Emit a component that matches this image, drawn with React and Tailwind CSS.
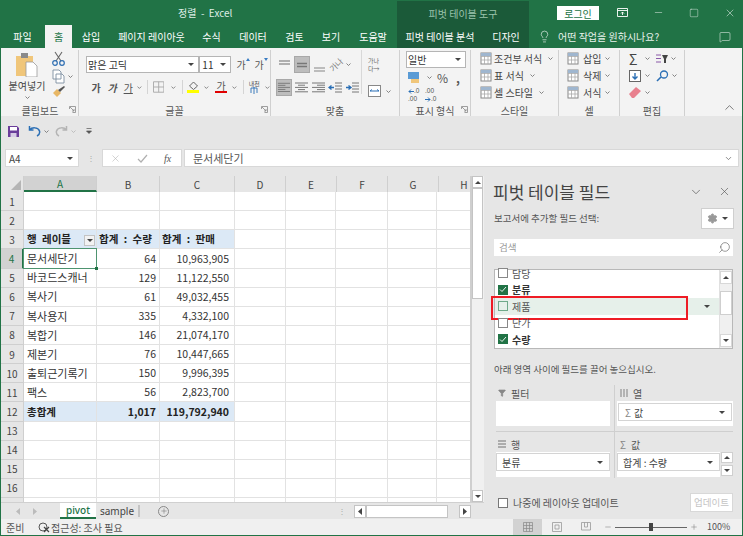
import React from 'react';
import { ChevronDown, ChevronUp, X, Search, Lightbulb, MessageSquare, Minus, Square, Settings, Filter, Plus } from 'lucide-react';

const tabs = [
  ['파일', 'w-[45px]'],
  ['홈', 'w-[27px] bg-[#f3f3f3] text-[#217346]'],
  ['삽입', 'w-[38px]'],
  ['페이지 레이아웃', 'w-[83px]'],
  ['수식', 'w-[37px]'],
  ['데이터', 'w-[46px]'],
  ['검토', 'w-[37px]'],
  ['보기', 'w-[36px]'],
  ['도움말', 'w-[48px]'],
  ['피벗 테이블 분석', 'w-[86px] bg-[#1b5a39]'],
  ['디자인', 'w-[46px] bg-[#1b5a39]'],
];

const columns = [
  ['A', 'w-[73px] bg-[#d2d2d2] text-[#217346] border-b-2 border-b-[#217346]'],
  ['B', 'w-[63px]'],
  ['C', 'w-[75px]'],
  ['D', 'w-[51px]'],
  ['E', 'w-[51px]'],
  ['F', 'w-[51px]'],
  ['G', 'w-[51px]'],
  ['H', 'w-[51px]'],
];

const rows = [
  ['문서세단기', '64', '10,963,905'],
  ['바코드스캐너', '129', '11,122,550'],
  ['복사기', '61', '49,032,455'],
  ['복사용지', '335', '4,332,100'],
  ['복합기', '146', '21,074,170'],
  ['제본기', '76', '10,447,665'],
  ['출퇴근기록기', '150', '9,996,395'],
  ['팩스', '56', '2,823,700'],
];

const Caret = ({ className = '' }) => (
  <svg width="5" height="3" viewBox="0 0 5 3" className={className}>
    <path d="M0.5 0.5 L2.5 2.5 L4.5 0.5" fill="none" stroke="#777" strokeWidth="0.9" />
  </svg>
);

const Solid = ({ className = '' }) => (
  <svg width="6" height="3" viewBox="0 0 6 3" className={className}>
    <path d="M0 0 H6 L3 3 Z" fill="#444" />
  </svg>
);

const SolidUp = () => (
  <svg width="6" height="3" viewBox="0 0 6 3">
    <path d="M0 3 H6 L3 0 Z" fill="#444" />
  </svg>
);

const SolidSide = ({ flip, color = '#444' }) => (
  <svg width="4" height="7" viewBox="0 0 4 7">
    <path d={flip ? 'M4 0 V7 L0 3.5 Z' : 'M0 0 V7 L4 3.5 Z'} fill={color} />
  </svg>
);

const Lines = ({ kind = 'left', active }) => {
  const sets = {
    left: [[1, 14], [1, 9], [1, 14], [1, 9], [1, 14]],
    center: [[1, 14], [4, 11], [1, 14], [4, 11], [1, 14]],
    right: [[1, 14], [6, 14], [1, 14], [6, 14], [1, 14]],
  };
  return (
    <span className={`w-[16px] h-[17px] flex items-center justify-center ${active ? 'bg-[#bdbdbd] border border-[#a8a8a8]' : ''}`}>
      <svg width="15" height="13" viewBox="0 0 15 13">
        {sets[kind].map(([a, b], i) => (
          <line key={i} x1={a} x2={b} y1={2 + i * 2.2} y2={2 + i * 2.2} stroke="#777" strokeWidth="1" />
        ))}
      </svg>
    </span>
  );
};

const Indent = ({ flip }) => (
  <svg width="15" height="13" viewBox="0 0 15 13">
    {[2, 5, 8, 11].map((y) => (
      <line key={y} x1="7" x2="14" y1={y} y2={y} stroke="#777" strokeWidth="1" />
    ))}
    <path d={flip ? 'M1 6.5 H5 M3.5 4.5 L6 6.5 L3.5 8.5' : 'M6 6.5 H2 M3.5 4.5 L1 6.5 L3.5 8.5'} fill="none" stroke="#2b6fb5" strokeWidth="1.4" />
  </svg>
);

const Group = ({ width, label, launcher, children }) => (
  <div className={`${width} h-full flex flex-col border-r border-[#d0d0d0] shrink-0 relative`}>
    <div className="flex-1 min-h-0">{children}</div>
    <div className="h-[12px] relative flex items-center justify-center text-[10px] text-[#555]">
      {label}
      {launcher && (
        <svg width="7" height="7" viewBox="0 0 7 7" className="absolute right-[2px] top-[2px]">
          <path d="M0.5 3 V0.5 H6.5 V6.5 H3.5 M1 1 L5 5 M5 3 V5 H3" fill="none" stroke="#888" strokeWidth="0.8" />
        </svg>
      )}
    </div>
  </div>
);

const TableIcon = () => (
  <svg width="13" height="13" viewBox="0 0 13 13">
    <rect x="1" y="1" width="10" height="11" fill="#fff" stroke="#888" />
    <path d="M1 4.5 H11 M1 8 H11 M4.5 1 V12 M8 1 V12" stroke="#aaa" strokeWidth="0.8" />
    <rect x="1" y="1" width="10" height="3" fill="#9fb6cf" />
  </svg>
);

const StyleRow = ({ text, icon }) => (
  <div className="h-[17px] flex items-center text-[10px] text-[#444]">
    <span className="w-[13px] mr-[1px] flex">{icon}</span>
    <span>{text}</span>
    <Caret className="ml-[6px]" />
  </div>
);

const CellRow = ({ text, icon }) => (
  <div className="h-[17px] flex items-center text-[10px] text-[#444]">
    <span className="w-[13px] mr-[3px] flex">{icon}</span>
    <span>{text}</span>
    <Caret className="ml-auto mr-[9px]" />
  </div>
);

const Ribbon = () => (
  <div className="h-[68px] bg-[#f3f3f3] flex pt-[2px] pl-[1px] shrink-0">
    <Group width="w-[77px]" label="클립보드" launcher>
      <div className="flex h-full">
        <div className="w-[50px] flex flex-col items-center pt-[2px]">
          <svg width="22" height="25" viewBox="0 0 22 25">
            <rect x="0" y="4" width="17" height="20" fill="#f0c67a" />
            <rect x="5" y="1" width="7" height="5" fill="#8a8a8a" />
            <path d="M10 10 H17 L21 14 V25 H10 Z" fill="#fff" stroke="#999" strokeWidth="0.8" />
          </svg>
          <span className="text-[10px] text-[#444] leading-[12px] mt-[3px]">붙여넣기</span>
          <Caret className="mt-[4px]" />
        </div>
        <div className="flex flex-col pt-[1px] gap-[1px]">
          <svg width="13" height="16" viewBox="0 0 13 16">
            <path d="M3 1 L9 10 M10 1 L4 10" stroke="#666" strokeWidth="1.1" fill="none" />
            <circle cx="3" cy="12" r="2.3" fill="none" stroke="#2f6fb3" strokeWidth="1.2" />
            <circle cx="10" cy="12" r="2.3" fill="none" stroke="#2f6fb3" strokeWidth="1.2" />
          </svg>
          <div className="flex items-center gap-[3px] mt-[1px]">
            <svg width="13" height="15" viewBox="0 0 13 15">
              <path d="M1 1 H7 L9 3 V10 H1 Z M4 5 H10 L12 7 V14 H4 Z" fill="#fff" stroke="#7d8ea0" strokeWidth="0.9" />
            </svg>
            <Caret />
          </div>
          <svg width="14" height="13" viewBox="0 0 14 13">
            <path d="M1 8 L5 4 L9 8 L5 12 Z" fill="#e8b765" />
            <path d="M6 5 L12 1 L13 2 L8 7 Z" fill="#555" />
          </svg>
        </div>
      </div>
    </Group>

    <Group width="w-[192px]" label="글꼴" launcher>
      <div className="pl-[7px] pt-[6px]">
        <div className="flex items-center h-[17px]">
          <div className="w-[114px] h-[17px] bg-white border border-[#b5b5b5] flex items-center pl-[1px] pr-[4px] text-[10px] text-[#333]">
            <span className="flex-1">맑은 고딕</span>
            <Solid />
          </div>
          <div className="w-[32px] h-[17px] bg-white border border-[#b5b5b5] flex items-center pl-[2px] pr-[4px] text-[10px] text-[#333]">
            <span className="flex-1">11</span>
            <Solid />
          </div>
          <span className="ml-[3px] w-[18px] flex items-start justify-center text-[10px] text-[#555]">
            가
            <svg width="4" height="3" viewBox="0 0 4 3" className="mt-[1px]"><path d="M0 3 L2 0 L4 3 Z" fill="#3a7cc2" /></svg>
          </span>
          <span className="w-[18px] flex items-start justify-center text-[10px] text-[#555]">
            가
            <svg width="4" height="3" viewBox="0 0 4 3" className="mt-[1px]"><path d="M0 0 L2 3 L4 0 Z" fill="#3a7cc2" /></svg>
          </span>
        </div>
        <div className="flex items-center h-[18px] mt-[5px] text-[10px] font-bold text-[#555]">
          <span className="ml-[2px] w-[17px] text-center">가</span>
          <span className="w-[17px] text-center italic">가</span>
          <span className="w-[17px] text-center underline font-normal">가</span>
          <Caret className="ml-[1px]" />
          <span className="w-[1px] h-[14px] bg-[#d4d4d4] ml-[5px] mr-[5px]" />
          <svg width="12" height="12" viewBox="0 0 12 12">
            <path d="M0.5 0.5 H11.5 V11.5 H0.5 Z M6 0.5 V11.5 M0.5 6 H11.5" fill="none" stroke="#aaa" />
          </svg>
          <Caret className="ml-[7px]" />
          <span className="w-[1px] h-[14px] bg-[#d4d4d4] ml-[6px] mr-[4px]" />
          <span className="w-[13px] flex flex-col items-center">
            <svg width="11" height="9" viewBox="0 0 11 9">
              <path d="M5.5 1 L9.5 5 L5.5 8.5 L1.5 5 Z" fill="none" stroke="#666" />
            </svg>
            <span className="w-[12px] h-[2.5px] bg-[#ffff00]" />
          </span>
          <Caret className="ml-[5px]" />
          <span className="ml-[6px] w-[13px] flex flex-col items-center text-[10px] leading-[10px] font-normal">
            가
            <span className="w-[12px] h-[2.5px] bg-[#e00000]" />
          </span>
          <Caret className="ml-[5px]" />
          <span className="w-[1px] h-[14px] bg-[#d4d4d4] ml-[6px] mr-[3px]" />
          <span className="w-[15px] flex flex-col items-center text-[6px] leading-[7px] font-normal">
            내천
            <svg width="8" height="7" viewBox="0 0 8 7"><path d="M4 0 V7 M1 1 H7 V6 M1 1 V6" fill="none" stroke="#2b6fb5" strokeWidth="0.9" /></svg>
          </span>
          <Caret className="ml-[4px]" />
        </div>
      </div>
    </Group>

    <Group width="w-[129px]" label="맞춤">
      <div className="flex h-full">
        <div className="w-[91px] pl-[6px] pt-[6px] border-r border-[#d8d8d8] h-[44px]">
          <div className="flex items-center h-[17px] gap-[1px]">
            <svg width="16" height="10" viewBox="0 0 16 10"><path d="M2 1 H13 M2 4 H13" stroke="#999" strokeWidth="1.4" /></svg>
            <span className="w-[16px] h-[17px] bg-[#bdbdbd] border border-[#a8a8a8] flex items-center justify-center">
              <svg width="12" height="6" viewBox="0 0 12 6"><path d="M1 1.5 H11 M1 4.5 H11" stroke="#777" strokeWidth="1.4" /></svg>
            </span>
            <svg width="16" height="12" viewBox="0 0 16 12" className="mt-[4px]"><path d="M3 7 H14 M3 10 H14" stroke="#aaa" strokeWidth="1.4" /></svg>
            <span className="text-[8px] leading-[8px] text-[#777] -rotate-45 ml-[1px]">가나</span>
            <Caret className="ml-[1px]" />
          </div>
          <div className="flex items-center h-[17px] mt-[6px] -ml-[1px] gap-[1px]">
            <Lines kind="left" active />
            <Lines kind="center" />
            <Lines kind="right" />
            <span className="w-[16px] flex justify-center"><Indent /></span>
            <span className="w-[16px] flex justify-center"><Indent flip /></span>
          </div>
        </div>
        <div className="pl-[6px] pt-[7px]">
          <span className="block text-[6px] leading-[8px] text-[#666]">가나<br />다→</span>
          <div className="flex items-center mt-[12px] gap-[5px]">
            <svg width="13" height="12" viewBox="0 0 13 12">
              <rect x="0.5" y="0.5" width="12" height="11" fill="#fff" stroke="#888" />
              <path d="M2 6 H11 M2 6 L4 4.5 M11 6 L9 4.5" stroke="#2b6fb5" fill="none" />
            </svg>
            <Caret />
          </div>
        </div>
      </div>
    </Group>

    <Group width="w-[71px]" label="표시 형식" launcher>
      <div className="pl-[6px] pt-[1px]">
        <div className="w-[60px] h-[17px] bg-white border border-[#b5b5b5] flex items-center pl-[1px] pr-[4px] text-[10px] text-[#333]">
          <span className="flex-1">일반</span>
          <Solid />
        </div>
        <div className="flex items-center h-[17px] mt-[1px] pl-[2px]">
          <svg width="12" height="13" viewBox="0 0 12 13">
            <rect x="0" y="1" width="11" height="7" fill="#5a9bd5" />
            <rect x="3" y="8" width="8" height="4" fill="#f0c67a" />
          </svg>
          <Caret className="ml-[7px]" />
          <span className="ml-[5px] text-[12px] leading-none text-[#555]">%</span>
          <span className="ml-[8px] text-[12px] font-bold leading-none text-[#555]">,</span>
        </div>
        <div className="flex mt-[1px] pl-[2px] gap-[5px] text-[6.5px] leading-[8px] text-[#555] font-['Liberation_Sans',sans-serif]">
          <div className="w-[12px] flex flex-col">
            <span className="flex items-center h-[8px]">
              <svg width="6" height="5" viewBox="0 0 6 5"><path d="M6 2.5 H1 M3 0.5 L1 2.5 L3 4.5" fill="none" stroke="#2b6fb5" /></svg>
              .0
            </span>
            <span className="h-[8px]">.00</span>
          </div>
          <div className="w-[12px] flex flex-col">
            <span className="h-[8px]">.00</span>
            <span className="flex items-center h-[8px]">
              <svg width="6" height="5" viewBox="0 0 6 5"><path d="M0 2.5 H5 M3 0.5 L5 2.5 L3 4.5" fill="none" stroke="#2b6fb5" /></svg>
              .0
            </span>
          </div>
        </div>
      </div>
    </Group>

    <Group width="w-[88px]" label="스타일">
      <div className="pl-[9px]">
        <StyleRow text="조건부 서식" icon={<TableIcon />} />
        <StyleRow text="표 서식" icon={<TableIcon />} />
        <StyleRow text="셀 스타일" icon={<TableIcon />} />
      </div>
    </Group>

    <Group width="w-[61px]" label="셀">
      <div className="pl-[8px]">
        <CellRow text="삽입" icon={<TableIcon />} />
        <CellRow text="삭제" icon={<TableIcon />} />
        <CellRow text="서식" icon={<TableIcon />} />
      </div>
    </Group>

    <Group width="w-[65px]" label="편집">
      <div className="pl-[9px] text-[#555]">
        <div className="flex items-center h-[17px]">
          <span className="w-[13px] text-[14px] leading-none text-[#444]">Σ</span>
          <Caret className="ml-[3px]" />
          <svg width="12" height="10" viewBox="0 0 12 10" className="ml-[6px]">
            <path d="M0 1 H5 M0 4.5 H5 M0 8 H5" stroke="#8a58a8" />
            <path d="M6 1 H12 L10 5 V9 H8 V5 Z" fill="#444" />
          </svg>
          <Caret className="ml-[3px]" />
        </div>
        <div className="flex items-center h-[17px]">
          <svg width="12" height="12" viewBox="0 0 12 12">
            <rect x="0.5" y="0.5" width="11" height="11" fill="#fff" stroke="#666" />
            <path d="M6 3 V9 M3.5 6.5 L6 9 L8.5 6.5" fill="none" stroke="#2b6fb5" strokeWidth="1.4" />
          </svg>
          <Caret className="ml-[4px]" />
          <svg width="13" height="12" viewBox="0 0 13 12" className="ml-[6px]">
            <circle cx="8" cy="4.5" r="3.5" fill="none" stroke="#2b6fb5" strokeWidth="1.3" />
            <path d="M5 7 L1 11" stroke="#2b6fb5" strokeWidth="1.6" />
          </svg>
          <Caret className="ml-[3px]" />
        </div>
        <div className="flex items-center h-[17px]">
          <svg width="12" height="11" viewBox="0 0 12 11">
            <path d="M0 7 L7 0 L12 4 L5 11 H3 Z" fill="#e8808e" />
          </svg>
          <Caret className="ml-[4px]" />
        </div>
      </div>
    </Group>

    <div className="flex-1 flex items-end justify-end pr-[5px] pb-[1px]">
      <ChevronUp size={15} strokeWidth={1.2} color="#555" />
    </div>
  </div>
);

const QuickBar = () => (
  <div className="h-[29px] bg-[#e6e6e6] flex items-center pl-[7px] pt-[1px] shrink-0">
    <svg width="11" height="11" viewBox="0 0 11 11">
      <path d="M0 0 H9 L11 2 V11 H0 Z" fill="#6a3d9a" />
      <rect x="2" y="1" width="7" height="3.5" fill="#fff" />
      <rect x="2.5" y="7" width="6" height="4" fill="#d8cde6" />
    </svg>
    <svg width="13" height="12" viewBox="0 0 13 12" className="ml-[9px]">
      <path d="M1.5 1 V5 H5.5 M1.5 5 C4 2 10 2 11.5 6 C12 8 11 10 9 11" fill="none" stroke="#2b6fb5" strokeWidth="1.5" />
    </svg>
    <Caret className="ml-[3px]" />
    <svg width="13" height="12" viewBox="0 0 13 12" className="ml-[6px]">
      <path d="M11.5 1 V5 H7.5 M11.5 5 C9 2 3 2 1.5 6 C1 8 2 10 4 11" fill="none" stroke="#b4b4b4" strokeWidth="1.5" />
    </svg>
    <Caret className="ml-[3px] opacity-40" />
    <svg width="6" height="6" viewBox="0 0 6 6" className="ml-[10px]">
      <path d="M0.5 0.5 H5.5 M0.5 3 H5.5 L3 5.5 Z" fill="#555" stroke="#555" strokeWidth="0.7" />
    </svg>
  </div>
);

const FormulaBar = () => (
  <div className="h-[31px] bg-[#e6e6e6] flex items-start pl-[4px] shrink-0">
    <div className="w-[74px] h-[18px] mt-[4px] bg-white border border-[#d8d8d8] flex items-center pl-[3px] pr-[5px] text-[10px] text-[#444]">
      <span className="flex-1">A4</span>
      <Solid />
    </div>
    <div className="w-[23px] h-[18px] mt-[4px] flex items-center justify-center text-[8px] text-[#aaa]">⋮</div>
    <div className="w-[80px] h-[18px] mt-[4px] bg-white border border-[#d8d8d8] flex items-center pl-[7px]">
      <X size={11} strokeWidth={1.2} color="#b0b0b0" />
      <svg width="11" height="9" viewBox="0 0 11 9" className="ml-[16px]"><path d="M1 5 L4 8 L10 1" fill="none" stroke="#b0b0b0" strokeWidth="1.2" /></svg>
      <span className="ml-[16px] text-[10px] italic text-[#555] font-['Liberation_Serif',serif]">fx</span>
    </div>
    <div className="ml-[2px] w-[555px] h-[18px] mt-[4px] bg-white border border-[#d8d8d8] flex items-center pl-[8px] pr-[5px] text-[11px] text-[#555]">
      <span className="flex-1">문서세단기</span>
      <ChevronDown size={9} strokeWidth={2} color="#666" />
    </div>
  </div>
);

const Cell = ({ width, children, className = '' }) => (
  <div className={`${width} shrink-0 h-full border-r border-b border-[#e2e2e2] flex items-center overflow-visible whitespace-nowrap ${className}`}>
    {children}
  </div>
);

const RowHead = ({ n, active }) => (
  <div className={`w-[23px] shrink-0 h-full flex items-center justify-center text-[10px] font-normal border-b border-r border-[#cfcfcf] ${active ? 'bg-[#d2d2d2] text-[#217346] border-r-2 border-r-[#217346]' : 'bg-[#e6e6e6] text-[#444]'}`}>
    {n}
  </div>
);

const blankCols = ['w-[51px]', 'w-[50px]', 'w-[52px]', 'w-[49px]', 'w-[52px]'];

const Blank = () => blankCols.map((w) => <Cell key={w} width={w} />);

const Sheet = () => (
  <div className="w-[483px] flex flex-col shrink-0 min-h-0">
    <div className="flex-1 flex min-h-0 bg-white">
      <div className="w-[469px] overflow-hidden">
        <div className="flex h-[16px] bg-[#e6e6e6] text-[10px] text-[#444]">
          <div className="w-[23px] shrink-0 border-r border-[#cfcfcf] flex items-end justify-end p-[2px]">
            <span className="w-0 h-0 border-l-[10px] border-l-transparent border-b-[10px] border-b-[#b5b5b5]" />
          </div>
          {columns.map(([c, cls]) => (
            <div key={c} className={`flex items-center justify-center border-r border-[#cfcfcf] shrink-0 ${cls}`}>{c}</div>
          ))}
        </div>
        {[1, 2].map((n) => (
          <div key={n} className="flex h-[19.13px]">
            <RowHead n={n} />
            <Cell width="w-[73px]" />
            <Cell width="w-[63px]" />
            <Cell width="w-[75px]" />
            <Blank />
          </div>
        ))}
        <div className="flex h-[19.13px] text-[10.5px] font-bold text-[#222] [word-spacing:3px]">
          <RowHead n={3} />
          <Cell width="w-[73px]" className="bg-[#dce9f6] pl-[3px] justify-between border-[#dce9f6]">
            행 레이블
            <span className="w-[11px] h-[11px] mr-[1px] mt-[3px] bg-[#f2f2f2] border border-[#c4c4c4] flex items-center justify-center"><Solid /></span>
          </Cell>
          <Cell width="w-[63px]" className="bg-[#dce9f6] pl-[2px] border-[#dce9f6]">합계 : 수량</Cell>
          <Cell width="w-[75px]" className="bg-[#dce9f6] pl-[2px] border-[#dce9f6]">합계 : 판매</Cell>
          <Blank />
        </div>
        {rows.map(([name, qty, sale], i) => (
          <div key={name} className="flex h-[19.13px] text-[#333]">
            <RowHead n={i + 4} active={i === 0} />
            <Cell width="w-[73px]" className={`pl-[3px] text-[11px] ${i === 0 ? 'relative' : ''}`}>
              {name}
              {i === 0 && (
                <>
                  <span className="absolute -inset-[1px] border-[1.5px] border-[#4e9470]" />
                  <span className="absolute right-[-2px] bottom-[-2px] w-[3px] h-[3px] bg-[#217346]" />
                </>
              )}
            </Cell>
            <Cell width="w-[63px]" className="justify-end pr-[3px] text-[10.5px]">{qty}</Cell>
            <Cell width="w-[75px]" className="justify-end pr-[5px] text-[10.5px]">{sale}</Cell>
            <Blank />
          </div>
        ))}
        <div className="flex h-[19.13px] text-[10.5px] font-bold text-[#222]">
          <RowHead n={12} />
          <Cell width="w-[73px]" className="bg-[#dce9f6] pl-[3px] border-[#dce9f6]">총합계</Cell>
          <Cell width="w-[63px]" className="bg-[#dce9f6] justify-end pr-[3px] border-[#dce9f6]">1,017</Cell>
          <Cell width="w-[75px]" className="bg-[#dce9f6] justify-end pr-[5px] border-[#dce9f6]">119,792,940</Cell>
          <Blank />
        </div>
        {[13, 14, 15, 16, ''].map((n) => (
          <div key={n} className="flex h-[19.13px]">
            <RowHead n={n} />
            <Cell width="w-[73px]" />
            <Cell width="w-[63px]" />
            <Cell width="w-[75px]" />
            <Blank />
          </div>
        ))}
      </div>
      <div className="w-[14px] bg-[#f0f0f0] border-l-2 border-[#cfcfcf] flex flex-col pr-[1px]">
        <span className="h-[12px] bg-white border border-[#c4c4c4] flex items-center justify-center shrink-0"><SolidUp /></span>
        <span className="h-[111px] bg-white border border-[#c4c4c4] shrink-0" />
        <span className="h-[12px] mt-auto bg-white border border-[#c4c4c4] flex items-center justify-center shrink-0"><Solid /></span>
      </div>
    </div>
    <div className="h-[17px] bg-[#e6e6e6] flex items-stretch text-[10px] shrink-0 border-t border-[#d0d0d0]">
      <div className="w-[59px] flex items-center pl-[15px] gap-[13px]">
        <SolidSide flip color="#bbb" />
        <SolidSide color="#bbb" />
      </div>
      <div className="w-[36px] bg-white border-b-2 border-b-[#217346] flex items-center justify-center text-[#217346] font-medium font-['Noto_Sans',sans-serif]">pivot</div>
      <div className="w-[44px] flex items-center justify-center text-[#444] border-r-2 border-[#c4c4c4] my-[2px] font-['Noto_Sans',sans-serif]">sample</div>
      <div className="ml-[18px] flex items-center">
        <span className="w-[11px] h-[11px] rounded-full border border-[#888] flex items-center justify-center">
          <Plus size={8} strokeWidth={1.4} color="#666" />
        </span>
      </div>
      <div className="ml-auto flex items-center pr-[13px]">
        <span className="text-[8px] text-[#aaa] mr-[8px]">⋮</span>
        <span className="w-[12px] h-[13px] bg-white border border-[#c4c4c4] flex items-center justify-center"><SolidSide flip /></span>
        <span className="w-[82px] h-[13px] bg-white border border-[#c4c4c4]" />
        <span className="w-[11px]" />
        <span className="w-[12px] h-[13px] bg-white border border-[#c4c4c4] flex items-center justify-center"><SolidSide /></span>
      </div>
    </div>
  </div>
);

const Check = ({ on, active }) => (
  <span className={`w-[10px] h-[10px] shrink-0 flex items-center justify-center border ${on ? 'bg-[#217346] border-[#217346]' : active ? 'border-[#6fa98a]' : 'border-[#888] bg-white'}`}>
    {on && (
      <svg width="8" height="7" viewBox="0 0 8 7"><path d="M1 3.5 L3 5.5 L7 1" fill="none" stroke="#fff" strokeWidth="0.9" /></svg>
    )}
  </span>
);

const FieldRow = ({ text, on, active }) => (
  <div className={`h-[16.5px] flex items-center pl-[3px] gap-[4px] text-[10px] relative ${on ? 'font-bold text-[#333]' : 'text-[#555]'} ${active ? 'bg-[#e6f0ea]' : ''}`}>
    <Check on={on} active={active} />
    {text}
    {active && (
      <>
        <Solid className="ml-auto mr-[9px]" />
        <span className="absolute left-[-4px] top-[-2px] w-[197px] h-[24px] border-[2.5px] border-[#ee1c25]" />
      </>
    )}
  </div>
);

const Chip = ({ text, sigma, className = '' }) => (
  <div className={`h-[18px] bg-white border border-[#d4d4d4] flex items-center pl-[4px] pr-[6px] text-[10px] text-[#444] ${className}`}>
    {sigma && <span className="mr-[3px] text-[#888]">Σ</span>}
    <span className="flex-1">{text}</span>
    <Solid />
  </div>
);

const Pane = () => (
  <div className="flex-1 bg-[#e6e6e6] flex flex-col pl-[9px] pr-[9px] min-w-0">
    <div className="flex items-center h-[29px] mt-[1px]">
      <span className="flex-1 text-[17px] text-[#444] leading-none">피벗 테이블 필드</span>
      <ChevronDown size={14} strokeWidth={1.2} color="#555" />
      <X size={13} strokeWidth={1.2} color="#555" className="ml-[15px] mr-[2px]" />
    </div>
    <div className="flex items-center h-[21px] mt-[2px] pl-[1px] text-[9.5px] text-[#555]">
      <span className="flex-1">보고서에 추가할 필드 선택:</span>
      <span className="w-[33px] h-[21px] mr-[-1px] bg-white border border-[#cfcfcf] flex items-center justify-center gap-[4px]">
        <Settings size={11} fill="#999" color="#999" />
        <Solid />
      </span>
    </div>
    <div className="h-[17px] mt-[10px] ml-[1px] bg-white flex items-center pl-[5px] pr-[2px] text-[9.5px] text-[#999]">
      <span className="flex-1">검색</span>
      <Search size={13} strokeWidth={1.1} color="#555" className="-scale-x-100" />
    </div>
    <div className="h-[80px] mt-[13px] ml-[1px] bg-white border border-[#b8b8b8] flex">
      <div className="flex-1 min-w-0 -mt-[5px] pt-0 overflow-visible">
        <div className="h-[79px] relative">
          <FieldRow text="담당" />
          <FieldRow text="분류" on />
          <FieldRow text="제품" active />
          <FieldRow text="단가" />
          <FieldRow text="수량" on />
        </div>
      </div>
      <div className="w-[13px] bg-[#f0f0f0] flex flex-col items-center justify-between py-[1px] border-l border-[#e0e0e0] shrink-0">
        <span className="h-[13px] w-full bg-white border border-[#d8d8d8] flex items-center justify-center"><SolidUp /></span>
        <span className="h-[24px] w-full bg-white border border-[#cfcfcf] -mt-[12px]" />
        <span className="h-[13px] w-full bg-white border border-[#d8d8d8] flex items-center justify-center"><Solid /></span>
      </div>
    </div>
    <div className="h-[14px] mt-[13px] pl-[1px] text-[9.5px] leading-[14px] text-[#555]">아래 영역 사이에 필드를 끌어 놓으십시오.</div>
    <div className="grid grid-cols-[119px_1fr] mt-[9px] ml-[3px]">
      <div className="border-r border-b border-[#cfcfcf] pr-[4px] h-[47px]">
        <div className="h-[16px] flex items-center gap-[4px] pl-[2px] text-[10px] text-[#555]">
          <Filter size={8} fill="#888" color="#888" /> <span className="ml-[1px]">필터</span>
        </div>
        <div className="h-[25px] bg-white" />
      </div>
      <div className="border-b border-[#cfcfcf] pl-[2px] h-[47px]">
        <div className="h-[16px] flex items-center gap-[4px] pl-[3px] text-[10px] text-[#555]">
          <svg width="8" height="8" viewBox="0 0 8 8"><path d="M1 0 V8 M4 0 V8 M7 0 V8" stroke="#999" strokeWidth="1.3" /></svg>
          <span className="ml-[1px]">열</span>
        </div>
        <div className="h-[25px] bg-white pt-[2px] px-[1px]"><Chip text="값" sigma className="h-[17px] pl-[6px]" /></div>
      </div>
      <div className="border-r border-[#cfcfcf] pr-[4px] h-[46px] pt-[1px]">
        <div className="h-[19px] pt-[3px] flex items-center gap-[4px] pl-[2px] text-[10px] text-[#555]">
          <svg width="8" height="8" viewBox="0 0 8 8"><path d="M0 1 H8 M0 4 H8 M0 7 H8" stroke="#999" strokeWidth="1.3" /></svg>
          <span className="ml-[1px]">행</span>
        </div>
        <div className="h-[25px] bg-white pt-[1px]"><Chip text="분류" className="pl-[5px]" /></div>
      </div>
      <div className="pl-[2px] h-[46px] pt-[1px]">
        <div className="h-[19px] pt-[3px] flex items-center gap-[4px] pl-[3px] text-[10px] text-[#555]">
          <span className="text-[#888]">Σ</span> <span className="ml-[1px]">값</span>
        </div>
        <div className="h-[25px] flex">
          <div className="flex-1 bg-white pt-[1px]"><Chip text="합계 : 수량" className="pl-[5px]" /></div>
          <div className="w-[12px] flex flex-col gap-[2px] ml-[1px]">
            <span className="h-[11px] bg-white border border-[#cfcfcf] flex items-center justify-center"><SolidUp /></span>
            <span className="h-[11px] bg-white border border-[#cfcfcf] flex items-center justify-center"><Solid /></span>
          </div>
        </div>
      </div>
    </div>
    <div className="flex items-center mt-[15px] pl-[5px] text-[10px] text-[#555]">
      <span className="w-[10px] h-[10px] border border-[#777] bg-white mr-[5px]" />
      <span className="flex-1">나중에 레이아웃 업데이트</span>
      <span className="w-[43px] h-[19px] bg-white border border-[#d8d8d8] flex items-center justify-center text-[#c4c4c4] text-[9.5px]">업데이트</span>
    </div>
  </div>
);

const StatusBar = () => (
  <div className="h-[16px] bg-[#f0f0f0] flex items-center text-[10px] text-[#555] shrink-0">
    <span className="ml-[5px] w-[32px]">준비</span>
    <svg width="12" height="11" viewBox="0 0 12 11">
      <circle cx="5" cy="5" r="4" fill="none" stroke="#555" />
      <path d="M6 5 L11 10 M11 5 L6 10" stroke="#444" strokeWidth="1.2" />
    </svg>
    <span className="ml-[1px]">접근성: 조사 필요</span>
    <div className="ml-auto h-full flex items-center mr-[14px]">
      <span className="w-[29px] h-full bg-[#d2d2d2] flex items-center justify-center">
        <svg width="10" height="10" viewBox="0 0 10 10"><path d="M0.5 0.5 H9.5 V9.5 H0.5 Z M0.5 3.5 H9.5 M0.5 6.5 H9.5 M3.5 0.5 V9.5 M6.5 0.5 V9.5" fill="none" stroke="#888" strokeWidth="0.7" /></svg>
      </span>
      <span className="w-[29px] flex justify-center">
        <svg width="10" height="10" viewBox="0 0 10 10"><path d="M0.5 0.5 H9.5 V9.5 H0.5 Z M3 3 H7 V7 H3 Z" fill="none" stroke="#999" strokeWidth="0.8" /></svg>
      </span>
      <span className="w-[29px] flex justify-center">
        <svg width="10" height="10" viewBox="0 0 10 10"><path d="M0.5 0.5 H9.5 V8 H0.5 Z M3.5 0.5 V5 H6.5 V0.5" fill="none" stroke="#999" strokeWidth="0.8" /></svg>
      </span>
      <Minus size={8} strokeWidth={1.5} color="#777" className="ml-[4px] shrink-0" />
      <span className="w-[72px] h-[1px] bg-[#666] ml-[3px] flex items-center justify-center">
        <span className="w-[4px] h-[8px] bg-[#444]" />
      </span>
      <Plus size={8} strokeWidth={1.5} color="#777" className="ml-[3px] shrink-0" />
      <span className="ml-[9px] w-[21px] whitespace-nowrap text-[9px]">100%</span>
    </div>
  </div>
);

export default function App() {
  return (
    <div className="w-[743px] h-[536px] overflow-hidden flex flex-col border-x border-b border-[#217346] bg-[#e6e6e6] font-['Noto_Sans_CJK_KR','Liberation_Sans',sans-serif]">
      <div className="h-[48px] bg-[#217346] text-white shrink-0 -mx-[1px]">
        <div className="h-[25px] flex items-stretch">
          <div className="w-[397px] flex items-center pl-[178px] text-[10px] text-[#dfeee6]">
            <span>정렬&nbsp;&nbsp;-&nbsp;&nbsp;Excel</span>
          </div>
          <div className="w-[132px] mt-[1px] bg-[#1b5a39] flex items-center justify-center text-[10px] text-[#9bc4ad]">피벗 테이블 도구</div>
          <div className="w-[28px]" />
          <span className="w-[42px] h-[14px] mt-[6px] bg-white text-[#217346] text-[10px] flex items-center justify-center">로그인</span>
          <div className="flex-1 flex items-center pl-[18px] gap-[25px] text-white">
            <svg width="11" height="9" viewBox="0 0 11 9">
              <path d="M0.5 0.5 H10.5 V8.5 H0.5 Z M0.5 2.5 H10.5 M5.5 7 V4 M4 5.5 L5.5 4 L7 5.5" fill="none" stroke="#fff" strokeWidth="0.9" />
            </svg>
            <Minus size={11} strokeWidth={1} />
            <Square size={10} strokeWidth={1} />
            <X size={12} strokeWidth={1} />
          </div>
        </div>
        <div className="h-[23px] flex items-stretch text-[10px]">
          {tabs.map(([t, cls]) => (
            <div key={t} className={`flex items-center justify-center shrink-0 ${cls}`}>{t}</div>
          ))}
          <div className="flex-1 flex items-center pl-[9px] text-[10px] text-[#e8f2ec]">
            <Lightbulb size={13} strokeWidth={1.1} color="#fff" />
            <span className="ml-[7px]">어떤 작업을 원하시나요?</span>
            <MessageSquare size={12} strokeWidth={1} color="#fff" className="ml-auto mr-[12px]" />
          </div>
        </div>
      </div>
      <Ribbon />
      <QuickBar />
      <FormulaBar />
      <div className="flex-1 flex min-h-0 overflow-hidden">
        <Sheet />
        <Pane />
      </div>
      <StatusBar />
    </div>
  );
}
